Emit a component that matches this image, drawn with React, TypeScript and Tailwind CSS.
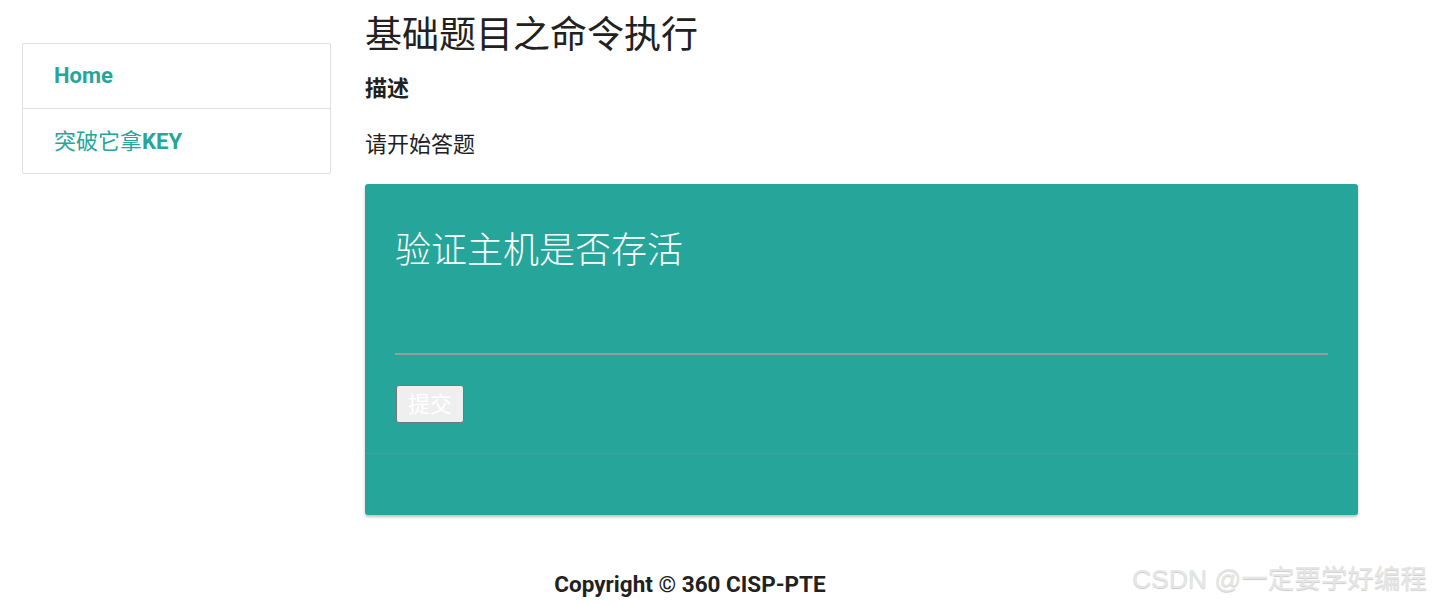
import React from 'react';

const FONT = { fontFamily: 'Roboto, "Noto Sans CJK SC", sans-serif' };

function SideNav() {
  return (
    <div className="mt-[43px] w-[309px] shrink-0 self-start rounded-[2px] border border-[#e0e0e0] bg-white">
      <div className="flex h-[65px] items-center border-b border-[#e0e0e0] px-[31px] pb-[2px] text-[22px] font-bold text-[#26a69a]">
        Home
      </div>
      <div className="flex h-[64px] items-center px-[31px] text-[22px] text-[#26a69a]">
        突破它拿<span className="font-bold">KEY</span>
      </div>
    </div>
  );
}

function TaskCard() {
  return (
    <div className="mt-[24px] rounded-[3px] bg-[#26a69a] shadow-[0_2px_3px_rgba(0,0,0,0.25)]">
      <div className="px-[30px] pt-[43px] pb-[30px]">
        <h2 className="text-[36px] leading-[48px] font-light text-white">验证主机是否存活</h2>
        <div className="mt-[78px] h-[2px] w-full bg-[#9e9e9e] opacity-90" />
        <button
          type="button"
          className="mt-[30px] ml-[1px] flex h-[38px] w-[68px] items-center justify-center rounded-[3px] border border-[#767676] bg-[#efefef] text-[22px] text-white"
        >
          提交
        </button>
      </div>
      <div className="h-[62px] border-t border-[rgba(160,160,160,0.2)]" />
    </div>
  );
}

export default function App() {
  return (
    <div className="relative h-[604px] w-full overflow-hidden bg-white text-[#212121]" style={FONT}>
      <div className="flex gap-[34px] pl-[22px]">
        <SideNav />
        <main className="w-[993px] pt-[15px]">
          <h1 className="text-[37px] leading-[42px]">基础题目之命令执行</h1>
          <h3 className="mt-[17px] text-[22px] leading-[30px] font-bold">描述</h3>
          <p className="mt-[26px] text-[22px] leading-[30px]">请开始答题</p>
          <TaskCard />
        </main>
      </div>
      <footer className="mt-[54px] flex justify-center pr-[52px] text-[22.5px] leading-[30px] font-bold">
        Copyright © 360 CISP-PTE
      </footer>
      <div
        className="absolute right-[5px] bottom-[10px] text-[26.5px] leading-[30px] text-[#e6e6e6] [text-shadow:0_1px_1px_rgba(0,0,0,0.2)]"
        style={{ fontFamily: '"Liberation Sans", "Noto Sans CJK SC", sans-serif' }}
      >
        CSDN @一定要学好编程
      </div>
    </div>
  );
}
